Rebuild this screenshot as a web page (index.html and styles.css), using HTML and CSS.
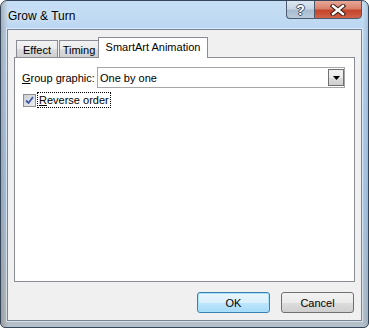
FILE: index.html
```html
<!DOCTYPE html>
<html>
<head>
    <!-- Dialog styles -->
    <link rel="stylesheet" href="styles.css">
</head>
<body>
    <div class="window">
        <!-- Title bar -->
        <div class="titlebar">
            <span class="title">Grow &amp; Turn</span>
            <div class="caption-buttons">
                <div class="cap-btn help">?</div>
                <div class="cap-btn close">
                    <svg width="16" height="12" viewBox="0 0 16 12">
                        <path d="M3 2 L13 10 M13 2 L3 10" stroke="#3a1a12" stroke-width="4.4" stroke-linecap="square"/>
                        <path d="M3 2 L13 10 M13 2 L3 10" stroke="#fff" stroke-width="2.4" stroke-linecap="square"/>
                    </svg>
                </div>
            </div>
        </div>

        <!-- Client area -->
        <div class="client">
            <div class="tabs">
                <div class="tab tab-effect">Effect</div>
                <div class="tab tab-timing">Timing</div>
                <div class="tab active">SmartArt Animation</div>
            </div>
            <div class="panel">
                <div class="row">
                    <label class="label"><u>G</u>roup graphic:</label>
                    <div class="combo">
                        <span class="combo-text">One by one</span>
                        <div class="drop">
                            <svg width="7" height="4" viewBox="0 0 7 4"><path d="M0 0 H7 L3.5 4 Z" fill="#000"/></svg>
                        </div>
                    </div>
                </div>
                <div class="check-row">
                    <span class="checkbox">
                        <svg width="9" height="9" viewBox="0 0 9 9"><path d="M1 4.5 L3.5 7 L8 1" stroke="#3d59a8" stroke-width="1.8" fill="none"/></svg>
                    </span>
                    <span class="focus"><u>R</u>everse order</span>
                </div>
            </div>
            <div class="buttons">
                <button class="btn default">OK</button>
                <button class="btn">Cancel</button>
            </div>
        </div>
    </div>
</body>
</html>
```

FILE: styles.css
```css
body {
    margin: 0;
    background: #fff;
    font-family: "Liberation Sans", Arial, sans-serif;
}

/* Window frame */
.window {
    width: 369px;
    height: 328px;
    box-sizing: border-box;
    border: 1px solid #35465a;
    border-radius: 7px 7px 5px 5px;
    background:
        linear-gradient(90deg, rgba(120, 95, 70, 0.35) 0px, rgba(160, 190, 220, 0) 7px, rgba(160, 190, 220, 0) 362px, rgba(120, 140, 160, 0.3) 367px),
        linear-gradient(180deg, #c6def5 0px, #b7d4f0 40px, #a9c8e8 200px, #b4bfc8 328px);
    display: flex;
    flex-direction: column;
    overflow: hidden;
}

/* Title bar */
.titlebar {
    height: 28px;
    display: flex;
    align-items: flex-start;
}
.title {
    font-size: 12px;
    color: #000;
    margin: 8px 0 0 7px;
    text-shadow: 0 0 6px rgba(255, 255, 255, 0.9);
}
.caption-buttons {
    margin-left: auto;
    margin-right: 6px;
    margin-top: -1px;
    display: flex;
}
.cap-btn {
    height: 19px;
    box-sizing: border-box;
    border: 1px solid #4b5a6c;
    display: flex;
    align-items: center;
    justify-content: center;
}
.help {
    width: 28px;
    border-right: none;
    border-radius: 0 0 0 4px;
    background: linear-gradient(180deg, #dbe6f1 0%, #c8d6e4 45%, #a9bccf 55%, #b9cbdc 100%);
    color: #fff;
    font-size: 14px;
    font-weight: bold;
    text-shadow: -1px 0 #3e4d5f, 1px 0 #3e4d5f, 0 -1px #3e4d5f, 0 1px #3e4d5f;
}
.close {
    width: 48px;
    border-radius: 0 0 4px 0;
    background: linear-gradient(180deg, #e8a898 0%, #d8826b 45%, #c4432a 55%, #d0634a 100%);
}

/* Client area */
.client {
    flex: 1;
    margin: 0 6px 6px;
    border: 1px solid #76859a;
    box-shadow: 0 0 0 1px rgba(255, 255, 255, 0.5);
    background: #f0f0f0;
    padding: 7px 6px 7px 6px;
    display: flex;
    flex-direction: column;
    font-size: 11px;
    color: #000;
}

/* Tabs */
.tabs {
    height: 20px;
    display: flex;
    align-items: flex-end;
    padding-left: 2px;
}
.tab {
    height: 17px;
    box-sizing: border-box;
    border: 1px solid #898c95;
    border-bottom: none;
    background: linear-gradient(180deg, #f2f2f2 0%, #ebebeb 50%, #dddddd 51%, #cfcfcf 100%);
    display: flex;
    align-items: center;
    justify-content: center;
    padding-top: 1px;
}
.tab-effect {
    width: 42px;
    margin-right: 1px;
}
.tab-timing {
    width: 39px;
    border-right: none;
}
.tab.active {
    width: 110px;
    height: 21px;
    margin-bottom: -1px;
    background: #fff;
    position: relative;
    z-index: 1;
    padding-top: 0;
    padding-bottom: 3px;
}

/* Tab panel */
.panel {
    height: 225px;
    box-sizing: border-box;
    border: 1px solid #898c95;
    background: #fff;
    padding: 9px 0 0 7px;
}
.row {
    display: flex;
    align-items: center;
    height: 21px;
}
.label {
    width: 75px;
}
.combo {
    width: 248px;
    height: 21px;
    box-sizing: border-box;
    border: 1px solid #a6a6a6;
    padding: 1px 0 1px 2px;
    display: flex;
    align-items: center;
}
.combo-text {
    flex: 1;
}
.drop {
    width: 16px;
    height: 17px;
    box-sizing: border-box;
    border: 1px solid #707070;
    background: linear-gradient(180deg, #f2f2f2 0%, #ebebeb 50%, #dddddd 51%, #cfcfcf 100%);
    display: flex;
    align-items: center;
    justify-content: center;
}

/* Checkbox */
.check-row {
    display: flex;
    align-items: center;
    margin-top: 4px;
    height: 16px;
}
.checkbox {
    width: 13px;
    height: 13px;
    box-sizing: border-box;
    border: 1px solid #8e8f8f;
    background: linear-gradient(135deg, #cbcfd5 0%, #eceef1 100%);
    margin-left: 1px;
    display: flex;
    align-items: center;
    justify-content: center;
}
.focus {
    margin-left: 1px;
    height: 16px;
    box-sizing: border-box;
    border: 1px dotted #000;
    padding: 0 1px;
    display: flex;
    align-items: center;
}

/* Dialog buttons */
.buttons {
    margin-top: 10px;
    display: flex;
    justify-content: flex-end;
    gap: 11px;
    padding-right: 1px;
}
.btn {
    width: 73px;
    height: 21px;
    box-sizing: border-box;
    border: 1px solid #707070;
    border-radius: 3px;
    background: linear-gradient(180deg, #f2f2f2 0%, #ebebeb 50%, #dddddd 51%, #cfcfcf 100%);
    font-family: "Liberation Sans", Arial, sans-serif;
    font-size: 11px;
    color: #000;
    padding: 0;
}
.btn.default {
    border-color: #3c7fb1;
    background: linear-gradient(180deg, #eaf6fd 0%, #d9f0fc 50%, #bee6fd 51%, #a7d9f5 100%);
    box-shadow: inset 0 0 0 1px #a7e1fb;
}
```
